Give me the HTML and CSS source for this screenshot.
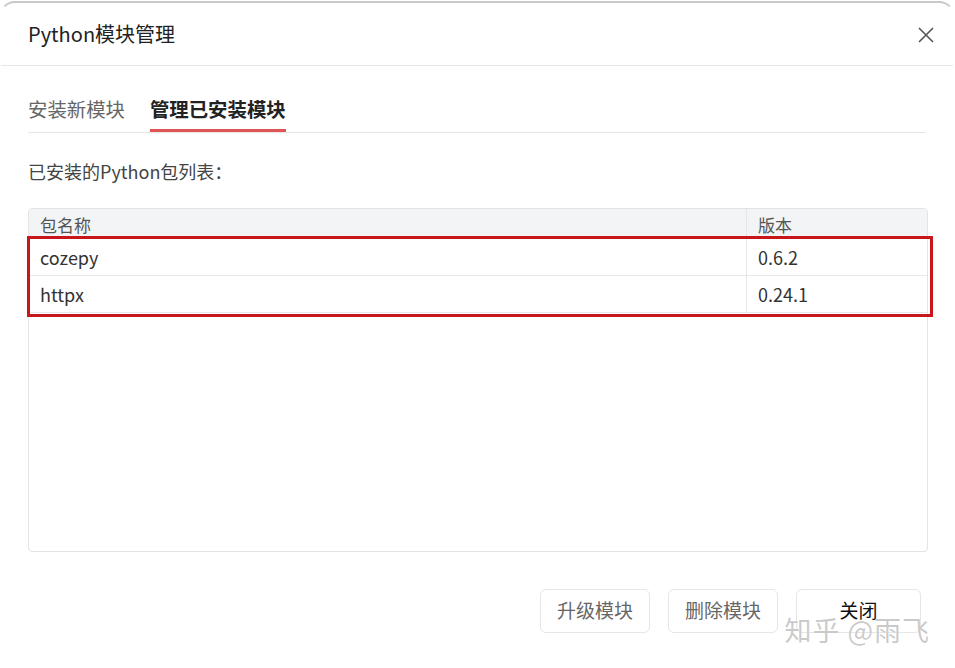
FILE: index.html
```html
<!DOCTYPE html>
<html lang="zh">
<head>
<meta charset="utf-8">
<link rel="stylesheet" href="styles.css">
</head>
<body>
<div class="dialog">
  <div class="header">
    <div class="title">Python模块管理</div>
    <svg class="close" width="18" height="18" viewBox="0 0 18 18"><path d="M2 2L16 16M16 2L2 16" stroke="#555" stroke-width="1.6" fill="none"/></svg>
  </div>
  <div class="body">
    <div class="tabs">
      <div class="tab">安装新模块</div>
      <div class="tab active">管理已安装模块</div>
    </div>
    <div class="label">已安装的Python包列表：</div>
    <div class="table-wrap">
      <div class="table">
        <div class="row head"><div class="c1">包名称</div><div class="c2">版本</div></div>
        <div class="row"><div class="c1">cozepy</div><div class="c2">0.6.2</div></div>
        <div class="row"><div class="c1">httpx</div><div class="c2">0.24.1</div></div>
      </div>
      <div class="highlight"></div>
    </div>
    <div class="footer">
      <button class="btn">升级模块</button>
      <button class="btn">删除模块</button>
      <button class="btn primary">关闭</button>
      <div class="watermark">知乎 @雨飞</div>
    </div>
  </div>
</div>
</body>
</html>
```
FILE: styles.css
```css
html, body { margin: 0; padding: 0; background: #fff; overflow: hidden; }
body { width: 955px; height: 668px; font-family: "Noto Sans CJK SC", "Noto Sans", sans-serif; }
.dialog {
  margin: 1px 0 0 -1px;
  width: 956px;
  height: 700px;
  border: 2px solid #c9c9c9;
  border-left-color: transparent;
  border-right-color: transparent;
  border-bottom: none;
  border-radius: 16px 16px 0 0;
  box-sizing: border-box;
  background: #fff;
}
.header {
  height: 63px;
  border-bottom: 1px solid #e6e6e6;
  display: flex;
  align-items: center;
  justify-content: space-between;
  padding: 0 18px 0 27px;
  box-sizing: border-box;
}
.title { font-size: 20px; color: #222; line-height: 1; margin-top: -1px; }
.close { margin-top: 2px; }
.body { padding: 0 27px 0 27px; }
.tabs {
  display: flex;
  gap: 25px;
  border-bottom: 1px solid #e6e6e6;
  margin-top: 28px;
  height: 38px;
}
.tab { font-size: 19.4px; color: #666; line-height: 30px; height: 38px; box-sizing: border-box; }
.tab.active { font-weight: 700; color: #222; border-bottom: 3px solid #e05456; }
.label { font-size: 18px; color: #444; margin-top: 25px; line-height: 26px; }
.table-wrap { position: relative; margin-top: 24px; }
.table {
  width: 900px;
  height: 344px;
  border: 1px solid #e3e3e3;
  border-radius: 4px;
  box-sizing: border-box;
  overflow: hidden;
}
.row { display: flex; height: 37px; box-sizing: border-box; border-bottom: 1px solid #e8e8e8; font-size: 18px; color: #333; }
.row.head { height: 30px; background: #f3f4f6; font-size: 17px; color: #555; border-bottom: none; }
.row > div { display: flex; align-items: center; padding-left: 11px; box-sizing: border-box; }
.c1 { width: 718px; border-right: 1px solid #e6e6e6; }
.c2 { flex: 1; }
.highlight {
  position: absolute;
  left: -1px;
  top: 28px;
  width: 906px;
  height: 81px;
  border: 3px solid #c7161c;
  box-sizing: border-box;
}
.footer {
  position: relative;
  display: flex;
  justify-content: flex-end;
  gap: 18px;
  margin-top: 37px;
  padding-right: 5px;
}
.btn {
  font-family: inherit;
  font-size: 19px;
  line-height: 1;
  color: #666;
  background: #fff;
  border: 1.5px solid #e6e6e6;
  border-radius: 6px;
  height: 44px;
  width: 110px;
  padding: 0 0 3px 0;
}
.btn.primary { width: 125px; color: #111; }
.watermark {
  position: absolute;
  right: -4px;
  top: 21px;
  font-size: 27px;
  color: rgba(150, 150, 150, 0.5);
  letter-spacing: 1px;
  text-shadow: 0 0 1px #fff;
  pointer-events: none;
}
```
